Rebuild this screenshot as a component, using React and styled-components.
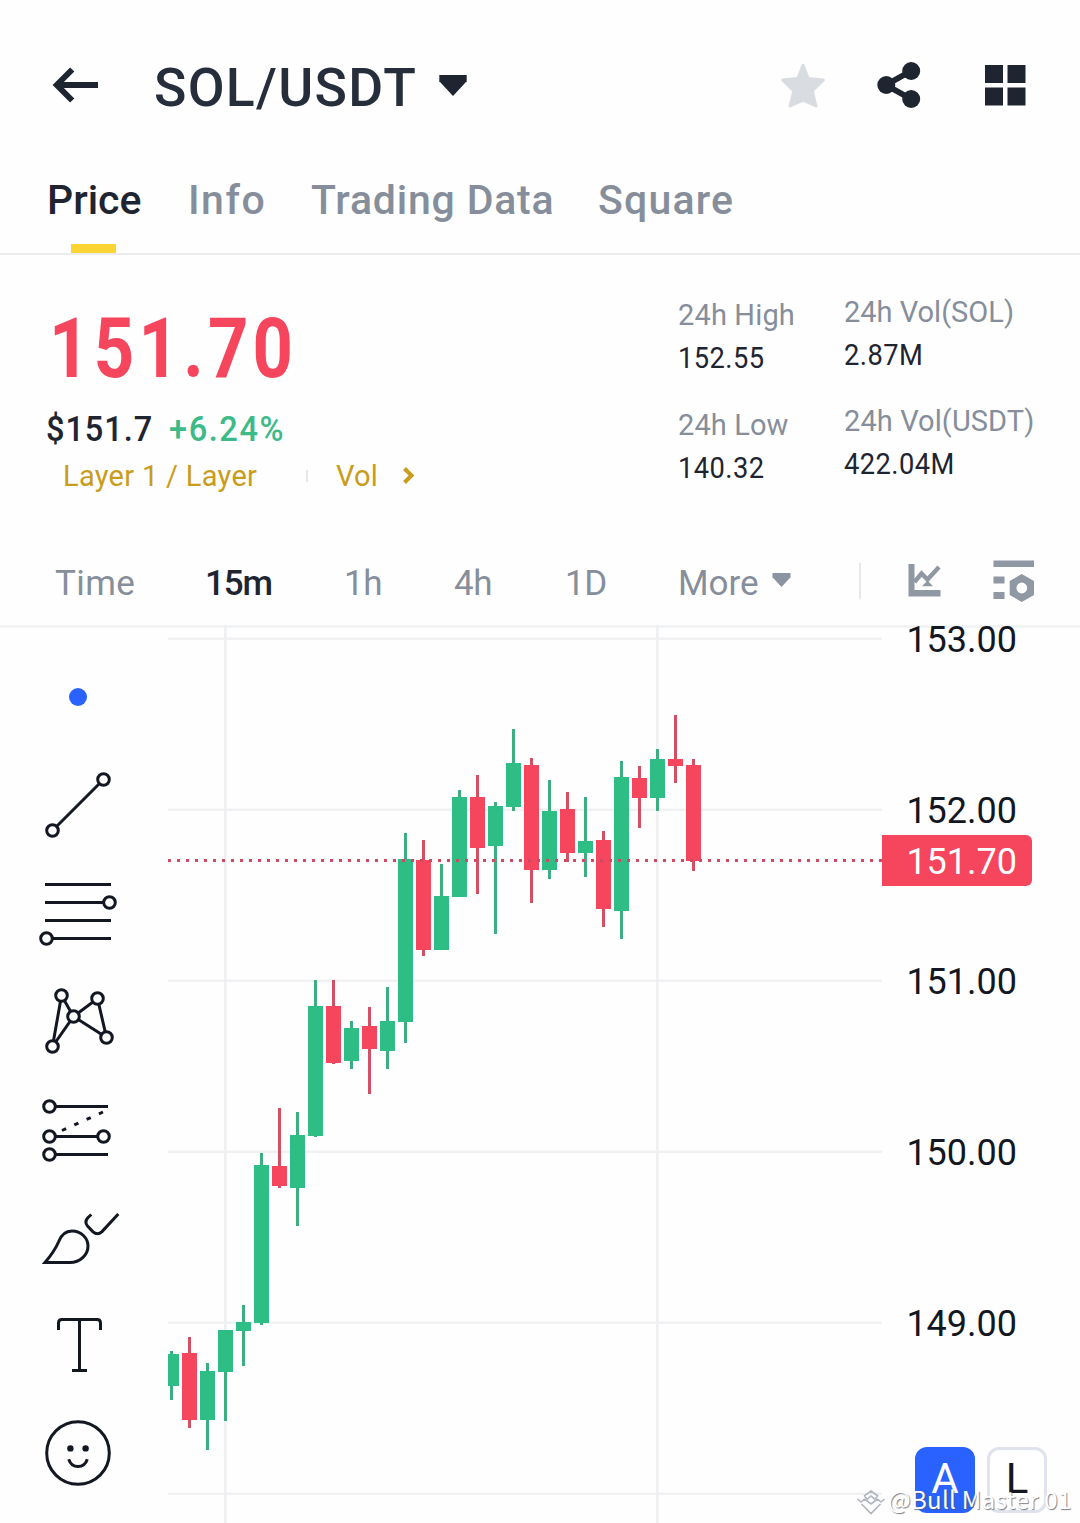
import React from "react";
import styled, { createGlobalStyle } from "styled-components";

const GlobalStyle = createGlobalStyle`
  *, *::before, *::after { box-sizing: border-box; }
  body { margin: 0; background: #fefefe; }
`;

const ink = "#1e2430";
const muted = "#868e9b";
const up = "#2ebd85";
const down = "#f6465d";

const Screen = styled.main`
  width: 1080px;
  height: 1523px;
  overflow: hidden;
  position: relative;
  display: flex;
  flex-direction: column;
  background: #fefefe;
  font-family: Roboto, "Liberation Sans", sans-serif;
  color: ${ink};
`;

const Text = styled.span`
  display: block;
  flex: none;
  margin: 0;
  padding-top: ${(p) => p.$drop || 0}px;
  white-space: pre;
  font-size: ${(p) => p.$size}px;
  line-height: ${(p) => p.$line || p.$size}px;
  font-weight: ${(p) => p.$weight || 400};
  letter-spacing: ${(p) => p.$track || 0}px;
  color: ${(p) => p.$color || "inherit"};
  width: ${(p) => (p.$w ? `${p.$w}px` : "auto")};
  transform: ${(p) => (p.$squeeze ? `scaleX(${p.$squeeze})` : "none")};
  transform-origin: 0 50%;
`;

const Icon = styled.svg`
  display: block;
  flex: none;
  overflow: ${(p) => (p.$clip ? "hidden" : "visible")};
  margin-left: ${(p) => p.$ml || 0}px;
  margin-top: ${(p) => p.$mt || 0}px;
`;

/* header */
const Header = styled.header`
  flex: none;
  height: 146px;
  padding: 24px 54px 0 52px;
  display: flex;
  align-items: center;
`;
const Pair = styled.div`
  display: flex;
  align-items: center;
  width: 674px;
  margin-left: 54px;
  gap: 22px;
`;
const Actions = styled.div`
  display: flex;
  align-items: center;
  gap: 51px;
`;

/* tabs */
const Tabs = styled.nav`
  flex: none;
  height: 109px;
  padding-left: 47px;
  display: flex;
  border-bottom: 2px solid #ebecee;
`;
const Tab = styled.div`
  flex: none;
  width: ${(p) => p.$w}px;
  display: flex;
  flex-direction: column;
  justify-content: space-between;
  padding-top: 33px;
`;
const Underline = styled.span`
  width: 45px;
  height: 9px;
  margin-left: 24px;
  background: #fcd535;
`;

/* summary */
const Summary = styled.section`
  flex: none;
  height: 285px;
  display: flex;
`;
const Quote = styled.div`
  width: 678px;
  padding: 52px 0 0 46px;
`;
const LastPrice = styled.div`
  padding-left: 3px;
`;
const Line = styled.div`
  display: flex;
  align-items: center;
  height: ${(p) => p.$h}px;
  padding-left: ${(p) => p.$indent || 0}px;
  margin-top: ${(p) => p.$top || 0}px;
`;
const Rule = styled.span`
  flex: none;
  width: 2px;
  height: ${(p) => p.$h}px;
  margin: ${(p) => p.$m};
  background: #e6e8ea;
`;
const Stats = styled.dl`
  margin: 0;
  width: ${(p) => p.$w}px;
  padding-top: ${(p) => p.$top}px;
  display: flex;
  flex-direction: column;
  gap: ${(p) => p.$gap}px;
`;
const Stat = styled.div`
  display: flex;
  flex-direction: column;
  gap: ${(p) => p.$gap}px;
`;

/* interval bar */
const Intervals = styled.div`
  flex: none;
  height: 85px;
  padding: 0 0 4px 55px;
  display: flex;
  align-items: center;
`;
const More = styled.div`
  display: flex;
  align-items: center;
  width: 181px;
`;

/* chart */
const ChartArea = styled.section`
  flex: 1;
  display: flex;
  position: relative;
  background: linear-gradient(#f1f3f4 3px, transparent 3px);
`;
const Rail = styled.aside`
  width: 168px;
  padding: 18px 0 0 24px;
  display: flex;
  flex-direction: column;
`;
const Axis = styled.div`
  width: 198px;
  margin-top: -70.4px;
  padding-left: 24.4px;
  display: flex;
  flex-direction: column;
`;
const PriceTag = styled.div`
  position: absolute;
  left: 882px;
  top: 210px;
  width: 150px;
  height: 51px;
  padding: 2px 0 0 24.4px;
  border-radius: 0 6px 6px 0;
  background: ${down};
`;
const Modes = styled.div`
  position: absolute;
  left: 915px;
  top: 822px;
  display: flex;
  gap: 12px;
`;
const Mode = styled.button`
  width: 60px;
  height: 66px;
  padding: 0 0 2px;
  display: flex;
  align-items: center;
  justify-content: center;
  border-radius: 12px;
  border: 3px solid ${(p) => (p.$on ? "#2962ff" : "#e0e3eb")};
  background: ${(p) => (p.$on ? "#2962ff" : "#fff")};
  color: ${(p) => (p.$on ? "#fff" : "#131722")};
  font: 400 42px/60px Roboto, sans-serif;
`;
const Watermark = styled.div`
  position: absolute;
  left: 856px;
  top: 1482px;
  display: flex;
  align-items: center;
  gap: 2px;
  font: 400 24px/32px "Noto Sans CJK SC", "Noto Sans", sans-serif;
  color: #fff;
  white-space: pre;
  text-shadow: 1px 1px 1px rgba(80, 85, 100, 0.75);
  letter-spacing: 0.3px;
`;

const candles = [
  [1351, 1354, 1386, 1400, 1], [1337, 1353, 1420, 1428, 0], [1363, 1371, 1420, 1450, 1],
  [1330, 1330, 1372, 1421, 1], [1305, 1322, 1331, 1366, 1], [1153, 1165, 1323, 1325, 1],
  [1108, 1166, 1186, 1188, 0], [1112, 1135, 1188, 1226, 1], [980, 1006, 1136, 1137, 1],
  [980, 1006, 1063, 1064, 0], [1021, 1028, 1061, 1069, 1], [1007, 1026, 1049, 1094, 0],
  [987, 1021, 1051, 1069, 1], [833, 859, 1022, 1043, 1], [840, 860, 950, 956, 0],
  [864, 896, 950, 950, 1], [790, 797, 897, 897, 1], [775, 797, 848, 894, 0],
  [802, 806, 846, 934, 1], [729, 763, 807, 811, 1], [758, 765, 870, 903, 0],
  [780, 811, 870, 879, 1], [792, 809, 853, 862, 0], [797, 841, 853, 877, 1],
  [831, 840, 909, 927, 0], [761, 777, 911, 939, 1], [766, 778, 798, 828, 0],
  [749, 759, 798, 811, 1], [715, 759, 766, 783, 0], [759, 765, 861, 871, 0],
];

function Candles() {
  return (
    <Icon $clip width="714" height="898" viewBox="168 625 714 898">
      {[638, 809, 980, 1151, 1322, 1493].map((y) => (
        <rect key={y} x="168" y={y - 0.4} width="714" height="2.4" fill="#f0f1f2" />
      ))}
      {[224, 656].map((x) => (
        <rect key={x} x={x} y="625" width="2.7" height="898" fill="#eff0f2" />
      ))}
      {candles.map(([hi, top, bottom, lo, rising], i) => {
        const x = 170 + i * 18;
        return (
          <g key={i}>
            <rect x={x} y={hi} width="3" height={lo - hi} fill={rising ? "#3dae82" : "#d44f63"} />
            <rect x={x - 6} y={top} width="15" height={bottom - top} fill={rising ? up : down} />
          </g>
        );
      })}
      <path d="M168 860.5H882" stroke="#cf4a60" strokeWidth="3" strokeDasharray="3 6" />
    </Icon>
  );
}

const Node = ({ x, y }) => <circle cx={x} cy={y} r="5.8" fill="#fefefe" />;

const tools = {
  dot: <circle r="9" fill="#2962ff" stroke="none" />,
  trend: (
    <>
      <path d="M-25.5 25.5L25.5 -25.5" />
      <Node x={25.5} y={-25.5} />
      <Node x={-25.5} y={25.5} />
    </>
  ),
  levels: (
    <>
      <path d="M-33 -28.5H33M-33 -10.5H31M-33 7.5H33M-31 25.5H33" />
      <Node x={31.5} y={-10.5} />
      <Node x={-31.5} y={25.5} />
    </>
  ),
  pattern: (
    <>
      <path d="M-16.5 -25.5L-25.5 25.5L-4.5 -4.5ZM-4.5 -4.5L19.5 -22.5L28.5 16.5Z" />
      <Node x={-16.5} y={-25.5} />
      <Node x={19.5} y={-22.5} />
      <Node x={-4.5} y={-4.5} />
      <Node x={-25.5} y={25.5} />
      <Node x={28.5} y={16.5} />
    </>
  ),
  forecast: (
    <>
      <path d="M-28.5 -22.5H30M-28.5 7.5H25M-28.5 25.5H30" />
      <path d="M-16 1.5L25 -17" strokeDasharray="4.5 9" />
      <Node x={-28.5} y={-22.5} />
      <Node x={-28.5} y={7.5} />
      <Node x={25.5} y={7.5} />
      <Node x={-28.5} y={25.5} />
    </>
  ),
  brush: (
    <>
      <path d="M-33 25.5C-27 18.5 -22.5 12 -19.5 5C-17 -2 -12 -6 -6 -6C3 -6 10 1 10 9C10 18 2 25.5 -8 25.5Z" />
      <path d="M13.3 -22.5L9.6 -19C7.2 -16 7.4 -13.5 9.5 -11L15 -5.2C18 -2.6 21 -2.6 24 -5.4L40.3 -23" />
    </>
  ),
  text: <path d="M-19.5 -15V-22Q-19.5 -25.5 -16 -25.5H19Q22.5 -25.5 22.5 -22V-15M1.5 -25.5V25.5M-6 25.5H9" />,
  smile: (
    <>
      <circle r="31.3" />
      <circle cx="-7.6" cy="-4.6" r="3.2" fill="#131722" stroke="none" />
      <circle cx="7.6" cy="-4.6" r="3.2" fill="#131722" stroke="none" />
      <path d="M-9.3 6.2C-6 16 6 16 9.3 6.2" />
    </>
  ),
};

const tabs = [
  ["Price", 141, 0, ink],
  ["Info", 123, 1.5, muted],
  ["Trading Data", 287, 0.8, muted],
  ["Square", 160, 1.2, muted],
];

const intervals = [
  ["Time", 150, 0.4],
  ["15m", 139, -1.2],
  ["1h", 110, -0.5],
  ["4h", 111, -0.5],
  ["1D", 113, -0.5],
];

const statColumns = [
  { w: 166, top: 43, gap: 30, inner: 6, rows: [["24h High", "152.55", 0.15], ["24h Low", "140.32", 0.1]] },
  { w: 236, top: 40, gap: 29, inner: 6, rows: [["24h Vol(SOL)", "2.87M", 0], ["24h Vol(USDT)", "422.04M", 0.1]] },
];

export default function App() {
  return (
    <Screen>
      <GlobalStyle />
      <Header>
        <Icon width="48" height="40" viewBox="52 65 48 40" fill="none" stroke={ink} strokeWidth="6">
          <path d="M72.2 69.5L56.8 85L72.2 100.5M56 85H98" />
        </Icon>
        <Pair>
          <Text as="h1" $drop={6} $size={53.5} $line={60} $weight={500} $track={1.3} $color="#262d3b">
            SOL/USDT
          </Text>
          <Icon width="28" height="22" viewBox="0 0 28 22" fill={ink}>
            <path d="M0.3 1H27.7V7.2L14 22L0.3 7.2Z" />
          </Icon>
        </Pair>
        <Actions>
          <Icon width="46" height="46" viewBox="0 0 46 46" fill="#d9dce1" stroke="#d9dce1" strokeWidth="3" strokeLinejoin="round">
            <path d="M23 3.2L28.2 16.6L43.4 18L32.2 28.8L36 44L23 38.2L10 44L13.8 28.8L2.6 18L17.8 16.6Z" />
          </Icon>
          <Icon width="44" height="46" viewBox="877 62 44 46" fill={ink} stroke={ink}>
            <path d="M911 71L886 85L911 99" fill="none" strokeWidth="6" />
            <g stroke="none">
              <circle cx="911.2" cy="71" r="9" />
              <circle cx="886.3" cy="85" r="9" />
              <circle cx="911.2" cy="99" r="9" />
            </g>
          </Icon>
          <Icon $ml={13} width="41" height="41" viewBox="0 0 41 41" fill={ink}>
            <path d="M0 0H18V18H0ZM22.5 0H40.5V18H22.5ZM0 22.5H18V40.5H0ZM22.5 22.5H40.5V40.5H22.5Z" />
          </Icon>
        </Actions>
      </Header>

      <Tabs>
        {tabs.map(([label, w, track, color], i) => (
          <Tab key={label} $w={w}>
            <Text $size={41} $line={42} $weight={500} $track={track} $color={color}>{label}</Text>
            {i === 0 && <Underline />}
          </Tab>
        ))}
      </Tabs>

      <Summary>
        <Quote>
          <LastPrice>
            <Text $size={83} $line={84} $weight={700} $track={5} $squeeze={0.85} $color={down}>151.70</Text>
          </LastPrice>
          <Line $h={40} $top={18}>
            <Text $size={35} $weight={500} $track={1} $squeeze={0.93} $w={122.5}>$151.7</Text>
            <Text $size={35} $weight={500} $track={1.7} $squeeze={0.93} $color="#3dba88">+6.24%</Text>
          </Line>
          <Line $h={34} $top={10} $indent={17}>
            <Text $size={29} $track={0.3} $w={243} $color="#c99c1c">Layer 1 / Layer</Text>
            <Rule $h={12} $m="0 28px 0 0" />
            <Text $size={29} $track={0.2} $w={67} $color="#c99c1c">Vol</Text>
            <Icon width="12" height="18" viewBox="0 0 12 18" fill="none" stroke="#c99c1c" strokeWidth="4">
              <path d="M1.5 1.5L8.5 8.5L1.5 15.5" />
            </Icon>
          </Line>
        </Quote>
        {statColumns.map((col) => (
          <Stats key={col.w} $w={col.w} $top={col.top} $gap={col.gap}>
            {col.rows.map(([label, value, track]) => (
              <Stat key={label} $gap={col.inner}>
                <Text as="dt" $size={29} $line={34} $track={track} $color={muted}>{label}</Text>
                <Text as="dd" $size={29} $line={40} $track={0.5} $squeeze={0.94}>{value}</Text>
              </Stat>
            ))}
          </Stats>
        ))}
      </Summary>

      <Intervals>
        {intervals.map(([label, w, track]) => (
          <Text key={label} $drop={6} $size={35} $w={w} $track={track} $weight={label === "15m" ? 500 : 400} $color={label === "15m" ? ink : muted}>
            {label}
          </Text>
        ))}
        <More>
          <Text $drop={6} $size={35} $w={94} $color={muted}>More</Text>
          <Icon $mt={-2} width="19" height="14" viewBox="0 0 19 14" fill="#8c94a1">
            <path d="M0.5 0H18.5V4.2L9.5 14L0.5 4.2Z" />
          </Icon>
        </More>
        <Rule $h={36} $m="0 47px 0 0" />
        <Icon width="33" height="33" viewBox="908.5 564 33 33" fill="#9098a4">
          <path d="M909 564H915V590H941V596.5H909Z" />
          <path d="M915 582L922 573.5L928 579.5L939.5 567" fill="none" stroke="#9098a4" strokeWidth="4.4" />
          <path d="M928 580.5L933.5 586.3H922.5Z" />
        </Icon>
        <Icon $ml={52} width="42" height="42" viewBox="993 560 42 42" fill="#9098a4">
          <path d="M993.5 560.5H1034V567H993.5ZM993.5 576.5H1004.5V583.5H993.5ZM993.5 592H1004.5V599H993.5Z" />
          <path fillRule="evenodd" d="M1021.8 574L1034 581V595L1021.8 602L1009.7 595V581ZM1021.8 582.6A5.4 5.4 0 1 0 1021.8 593.4A5.4 5.4 0 1 0 1021.8 582.6Z" />
        </Icon>
      </Intervals>

      <ChartArea>
        <Rail>
          {Object.entries(tools).map(([name, art]) => (
            <Icon key={name} width="108" height="108" viewBox="-54 -54 108 108" fill="none" stroke="#131722" strokeWidth="3">
              {art}
            </Icon>
          ))}
        </Rail>
        <Candles />
        <Axis>
          {["153.00", "152.00", "151.00", "150.00", "149.00"].map((p) => (
            <Text key={p} $size={36} $line={171} $color="#131722">{p}</Text>
          ))}
        </Axis>
        <PriceTag>
          <Text $size={36} $line={50} $color="#fff">151.70</Text>
        </PriceTag>
        <Modes>
          <Mode $on>A</Mode>
          <Mode>L</Mode>
        </Modes>
      </ChartArea>

      <Watermark>
        <Icon $mt={8} width="30" height="26" viewBox="0 0 30 26" fill="none" stroke="#b0b5bf" strokeWidth="1.6">
          <path d="M8 6L15 1L22 6M8 6L11.5 9L15 6L18.5 9L22 6M1.5 9L5 12L8.5 9M21.5 9L25 12L28.5 9M8.5 9L15 14L21.5 9M5.5 14L15 23.5L24.5 14" />
        </Icon>
        @Bull Master 01
      </Watermark>
    </Screen>
  );
}
